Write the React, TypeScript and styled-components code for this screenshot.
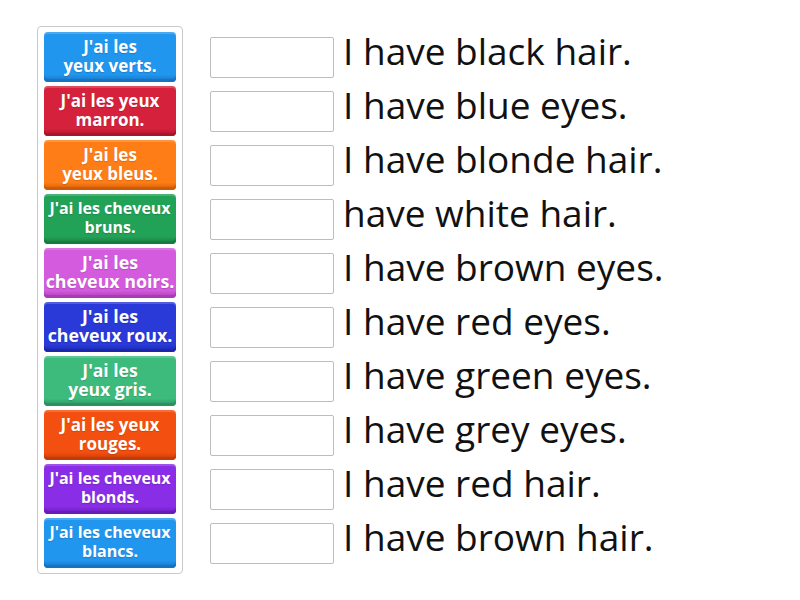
import React from "react";
import styled, { createGlobalStyle } from "styled-components";

const Global = createGlobalStyle`
  html, body { margin: 0; padding: 0; background: #ffffff; }
  body { font-family: "Open Sans", "Liberation Sans", sans-serif; }
`;

const Page = styled.div`
  display: flex;
  align-items: flex-start;
  padding: 26px 0 0 37px;
  gap: 27px;
`;

const Panel = styled.div`
  width: 146px;
  box-sizing: border-box;
  border: 1px solid #c9c9c9;
  border-radius: 4px;
  padding: 5px 6px;
  display: flex;
  flex-direction: column;
  gap: 4px;
`;

const Tile = styled.div<{ $c: string; $d: string; $fs: number }>`
  height: 50px;
  box-sizing: border-box;
  border-radius: 4px;
  background: linear-gradient(to bottom, ${(p) => p.$c} 0%, ${(p) => p.$c} 85%, ${(p) => p.$d} 100%);
  box-shadow: inset 0 2px 0 rgba(255, 255, 255, 0.18), inset 0 -3px 0 ${(p) => p.$d};
  display: flex;
  flex-direction: column;
  align-items: center;
  justify-content: center;
  text-align: center;
  color: #ffffff;
  font-family: "Open Sans", sans-serif;
  font-weight: 700;
  font-size: ${(p) => p.$fs}px;
  line-height: 19px;
  padding: 0 0 2px;
  white-space: nowrap;
  text-shadow: 0 1px 1px rgba(0, 0, 0, 0.15);
`;

const TileLine = styled.div`
  height: 19px;
`;

const Rows = styled.div`
  display: flex;
  flex-direction: column;
  gap: 4px;
  padding-top: 6px;
`;

const Row = styled.div`
  height: 50px;
  display: flex;
  align-items: center;
  gap: 9px;
`;

const Slot = styled.div`
  width: 124px;
  height: 41px;
  box-sizing: border-box;
  border: 1px solid #bdbdbd;
  border-radius: 2px;
  background: #ffffff;
  flex-shrink: 0;
`;

const Label = styled.div`
  font-family: "Open Sans", sans-serif;
  font-size: 37px;
  line-height: 50px;
  color: #111111;
  white-space: nowrap;
  margin-top: -12px;
`;

const tiles: { t: [string, string]; c: string; d: string; fs: number }[] = [
  { t: ["J'ai les", "yeux verts."], c: "#2196ee", d: "#1672c2", fs: 17 },
  { t: ["J'ai les yeux", "marron."], c: "#d6213d", d: "#a8162c", fs: 17 },
  { t: ["J'ai les", "yeux bleus."], c: "#ff7d16", d: "#cc5c08", fs: 17 },
  { t: ["J'ai les cheveux", "bruns."], c: "#22a257", d: "#177a3f", fs: 16 },
  { t: ["J'ai les", "cheveux noirs."], c: "#d45ade", d: "#a83db3", fs: 17.8 },
  { t: ["J'ai les", "cheveux roux."], c: "#2a3ad8", d: "#1a27a8", fs: 17.8 },
  { t: ["J'ai les", "yeux gris."], c: "#3dbb7d", d: "#2b915f", fs: 17.5 },
  { t: ["J'ai les yeux", "rouges."], c: "#f34f10", d: "#c23c08", fs: 17 },
  { t: ["J'ai les cheveux", "blonds."], c: "#8a2de6", d: "#661cb5", fs: 16 },
  { t: ["J'ai les cheveux", "blancs."], c: "#2196ee", d: "#1672c2", fs: 16 },
];

const labels = [
  "I have black hair.",
  "I have blue eyes.",
  "I have blonde hair.",
  "have white hair.",
  "I have brown eyes.",
  "I have red eyes.",
  "I have green eyes.",
  "I have grey eyes.",
  "I have red hair.",
  "I have brown hair.",
];

export default function App() {
  return (
    <>
      <Global />
      <Page>
        <Panel>
          {tiles.map((x, i) => (
            <Tile key={i} $c={x.c} $d={x.d} $fs={x.fs}>
              <TileLine>{x.t[0]}</TileLine>
              <TileLine>{x.t[1]}</TileLine>
            </Tile>
          ))}
        </Panel>
        <Rows>
          {labels.map((l, i) => (
            <Row key={i}>
              <Slot />
              <Label>{l}</Label>
            </Row>
          ))}
        </Rows>
      </Page>
    </>
  );
}
